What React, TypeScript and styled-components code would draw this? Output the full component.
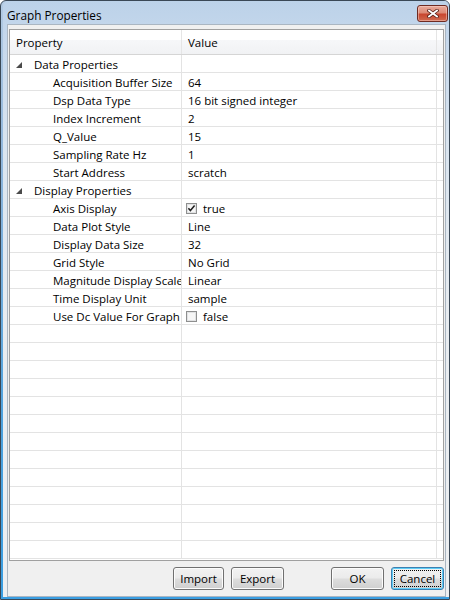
import React from 'react';
import styled, {createGlobalStyle} from 'styled-components';


type Item = {name: string; value: string; check?: boolean};
type Category = {title: string; items: Item[]};

const categories: Category[] = [
    {
        title: 'Data Properties',
        items: [
            {name: 'Acquisition Buffer Size', value: '64'},
            {name: 'Dsp Data Type', value: '16 bit signed integer'},
            {name: 'Index Increment', value: '2'},
            {name: 'Q_Value', value: '15'},
            {name: 'Sampling Rate Hz', value: '1'},
            {name: 'Start Address', value: 'scratch'},
        ],
    },
    {
        title: 'Display Properties',
        items: [
            {name: 'Axis Display', value: 'true', check: true},
            {name: 'Data Plot Style', value: 'Line'},
            {name: 'Display Data Size', value: '32'},
            {name: 'Grid Style', value: 'No Grid'},
            {name: 'Magnitude Display Scale', value: 'Linear'},
            {name: 'Time Display Unit', value: 'sample'},
            {name: 'Use Dc Value For Graph', value: 'false', check: false},
        ],
    },
];

const EMPTY_ROWS = 13;


const Expander = () => (
    <svg width="6" height="6" viewBox="0 0 6 6">
        <polygon points="6,0 6,6 0,6" fill="#4a4a4a"/>
    </svg>
);

const CheckBox = ({checked}: {checked: boolean}) => (
    <svg width="11" height="11" viewBox="0 0 11 11">
        <rect x="0.5" y="0.5" width="10" height="10" fill="#fff" stroke="#8e8f8f"/>
        <rect x="1.5" y="1.5" width="8" height="8" fill="#f6f6f6" stroke="#e2e3e4"/>
        {checked && <path d="M2.4 5.2 L4.4 7.6 L8.6 2.6" fill="none" stroke="#1e1e1e" strokeWidth="1.5"/>}
    </svg>
);

const CloseGlyph = () => (
    <svg width="12" height="9" viewBox="0 0 12 9">
        <path d="M2 1.5 L10 7.5 M10 1.5 L2 7.5" stroke="#5a2018" strokeWidth="3.4" strokeLinecap="square"/>
        <path d="M2 1.5 L10 7.5 M10 1.5 L2 7.5" stroke="#fff" strokeWidth="1.8" strokeLinecap="square"/>
    </svg>
);


const App = () => {
    return <>
        <GlobalStyle/>
        <Window>
            <Frame>
                <TitleBar>
                    <Title>Graph Properties</Title>
                    <CloseButton><CloseGlyph/></CloseButton>
                </TitleBar>

                <Client>
                    <PropertyGrid>
                        <HeaderRow>
                            <HeaderCell>Property</HeaderCell>
                            <HeaderCell>Value</HeaderCell>
                            <HeaderCell/>
                        </HeaderRow>

                        {categories.map(category => (
                            <React.Fragment key={category.title}>
                                <Row>
                                    <CategoryCell>
                                        <Expander/>
                                        <span>{category.title}</span>
                                    </CategoryCell>
                                    <ValueCell/>
                                    <Cell/>
                                </Row>
                                {category.items.map(item => (
                                    <Row key={item.name}>
                                        <NameCell>{item.name}</NameCell>
                                        <ValueCell $hasCheck={item.check !== undefined}>
                                            {item.check !== undefined && <CheckBox checked={item.check}/>}
                                            <span>{item.value}</span>
                                        </ValueCell>
                                        <Cell/>
                                    </Row>
                                ))}
                            </React.Fragment>
                        ))}

                        {Array.from({length: EMPTY_ROWS}).map((_, i) => (
                            <Row key={`empty-${i}`}>
                                <NameCell/>
                                <ValueCell/>
                                <Cell/>
                            </Row>
                        ))}
                    </PropertyGrid>

                    <ButtonBar>
                        <ButtonGroup>
                            <Button $width={51}>Import</Button>
                            <Button $width={53}>Export</Button>
                        </ButtonGroup>
                        <ButtonGroup>
                            <Button $width={53}>OK</Button>
                            <Button $width={53} $focused>Cancel</Button>
                        </ButtonGroup>
                    </ButtonBar>
                </Client>
            </Frame>
        </Window>
    </>;
};

export default App;



const GlobalStyle = createGlobalStyle`
    * {
        box-sizing: border-box;
    }

    body {
        margin: 0;
        background: #fff;
        font-family: "Open Sans", "Noto Sans", sans-serif;
        font-size: 11.5px;
        color: #000;
    }
`;

const Window = styled.div`
    width: 450px;
    height: 600px;
    display: flex;
    border: 1px solid #3a4856;
    border-radius: 6px 6px 0 0;
    padding: 0 2px 2px 2px;
    background: linear-gradient(180deg, #b4cbe3 0px, #8fb6dc 160px, #4ea2de 420px, #3a9ee2 100%);
    overflow: hidden;
`;

const Frame = styled.div`
    flex: 1;
    display: flex;
    flex-direction: column;
    padding: 0 4px;
    border-radius: 5px 5px 0 0;
    background: linear-gradient(180deg, #bcd2e9 0px, #c6d8ec 40px, #d9e4ef 140px, #e8ecf0 320px, #edeff1 100%);
`;

const TitleBar = styled.div`
    height: 24px;
    margin: 0 -4px;
    padding: 4px 2px 0 4px;
    display: flex;
    align-items: flex-start;
    justify-content: space-between;
`;

const Title = styled.div`
    line-height: 16px;
    padding-top: 2px;
    font-size: 11.8px;
    color: #000;
`;

const CloseButton = styled.div`
    width: 31px;
    height: 17px;
    display: flex;
    align-items: center;
    justify-content: center;
    border: 1px solid #6e2b22;
    border-radius: 3px;
    background: linear-gradient(180deg, #e9ab9c 0%, #dc8a76 45%, #c9462f 55%, #cf6a4f 100%);
    box-shadow: inset 0 0 0 1px rgba(255, 220, 210, .45);
`;

const Client = styled.div`
    flex: 1;
    display: flex;
    flex-direction: column;
    border: 1px solid #aab6c2;
    background: #f0f0f0;
    padding: 4px 1px 0 1px;
`;

const PropertyGrid = styled.div`
    height: 532px;
    border: 1px solid #a0a0a0;
    background: #fff;
    overflow: hidden;
`;

const HeaderRow = styled.div`
    display: grid;
    grid-template-columns: 172px 255px 1fr;
    height: 25px;
    border-bottom: 1px solid #d5d5d5;
    background: linear-gradient(180deg, #ffffff 0%, #ffffff 42%, #f6f7f9 42%, #f1f2f4 100%);
`;

const HeaderCell = styled.div`
    padding: 1px 0 0 6px;
    line-height: 23px;
    border-right: 1px solid #e5e5e5;
    white-space: nowrap;
    overflow: hidden;

    &:last-child {
        border-right: none;
    }
`;

const Row = styled.div`
    display: grid;
    grid-template-columns: 172px 255px 1fr;
    height: 18px;
    border-bottom: 1px solid #e3e3e3;
`;

const Cell = styled.div`
    padding-top: 2px;
    line-height: 15px;
    white-space: nowrap;
    overflow: hidden;
`;

const CategoryCell = styled(Cell)`
    display: flex;
    align-items: center;
    gap: 12px;
    padding-left: 6px;
    border-right: 1px solid #e3e3e3;
`;

const NameCell = styled(Cell)`
    padding-left: 43px;
    border-right: 1px solid #e3e3e3;
`;

const ValueCell = styled(Cell)<{$hasCheck?: boolean}>`
    display: flex;
    align-items: center;
    gap: 6px;
    padding-left: ${p => p.$hasCheck ? 4 : 6}px;
    border-right: 1px solid #e3e3e3;
`;

const ButtonBar = styled.div`
    display: flex;
    justify-content: flex-end;
    gap: 47px;
    padding: 6px 0 6px 0;
`;

const ButtonGroup = styled.div`
    display: flex;
    gap: 7px;
`;

const Button = styled.div<{$width: number; $focused?: boolean}>`
    position: relative;
    width: ${p => p.$width}px;
    height: 23px;
    display: flex;
    align-items: center;
    justify-content: center;
    border: 1px solid ${p => p.$focused ? '#3c7fb1' : '#707070'};
    border-radius: 3px;
    background: linear-gradient(180deg, #f2f2f2 0%, #ebebeb 48%, #dddddd 52%, #cfcfcf 100%);
    box-shadow: inset 0 0 0 1px ${p => p.$focused ? '#5fcdf6' : '#fcfcfc'};
    color: #000;

    ${p => p.$focused && `
        &::after {
            content: '';
            position: absolute;
            inset: 2px 2px 2px 2px;
            border: 1px dotted #000;
        }
    `}
`;
